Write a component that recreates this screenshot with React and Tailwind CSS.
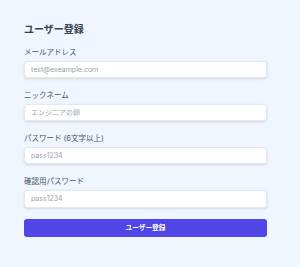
import React from 'react';

const fields = [
  { label: 'メールアドレス', placeholder: 'test@exeample.com', type: 'email' },
  { label: 'ニックネーム', placeholder: 'エンジニアの卵', type: 'text' },
  { label: 'パスワード (6文字以上)', placeholder: 'pass1234', type: 'password' },
  { label: '確認用パスワード', placeholder: 'pass1234', type: 'password' },
];

const App = () => {
  return (
    <div
      className="w-[300px] h-[267px] bg-[#eff6ff] pt-[22px] pl-[24px]"
      style={{ fontFamily: 'Inter, "Noto Sans CJK JP", sans-serif' }}
    >
      <div className="w-[243px]">
        <h2 className="text-[10px] leading-[14px] font-bold text-[#374151] mb-[11.5px]">ユーザー登録</h2>
        <div className="flex flex-col gap-[12.3px]">
          {fields.map((f, i) => (
            <div key={i} className="flex flex-col">
              <label className="text-[7.5px] leading-[10px] text-[#4b5563] mb-[3.3px]">{f.label}</label>
              <input
                type="text"
                placeholder={f.placeholder}
                className="h-[17.5px] w-full rounded-[3px] border border-[#e5e7eb] bg-white px-[6px] text-[7px] shadow-sm outline-none placeholder:text-[#9ca3af]"
              />
            </div>
          ))}
        </div>
        <button className="mt-[11.7px] h-[18px] w-full rounded-[3px] bg-[#4f46e5] text-[6.7px] font-bold text-white">
          ユーザー登録
        </button>
      </div>
    </div>
  );
};

export default App;
